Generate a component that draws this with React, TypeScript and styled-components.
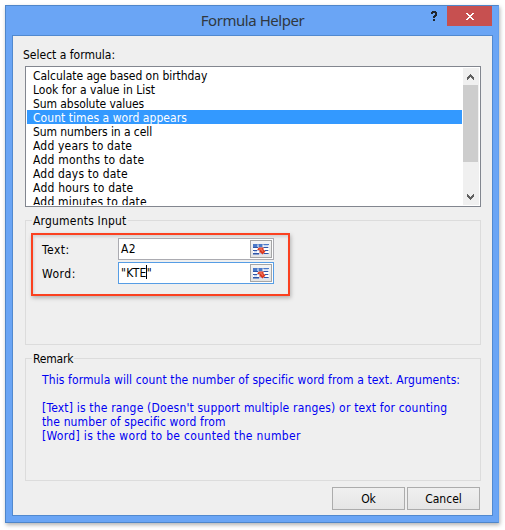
import React from "react";
import styled, { createGlobalStyle } from "styled-components";

const Global = createGlobalStyle`
  * { box-sizing: border-box; }
  body { margin: 0; background: #fff; overflow: hidden; }
`;

const Page = styled.div`
  width: 505px;
  height: 530px;
  padding: 5px 6px 7px 5px;
  font: 12px/14px "DejaVu Sans Condensed", "DejaVu Sans", sans-serif;
  font-stretch: condensed;
  color: #000;
`;

const Window = styled.section`
  width: 494px;
  height: 518px;
  display: flex;
  flex-direction: column;
  padding: 0 6px 6px;
  border: 1px solid #4f86c9;
  border-right-color: #629fee;
  background: #6aa5f5;
  box-shadow: 1px 2px 4px rgba(0, 0, 0, 0.3);
`;

const TitleBar = styled.header`
  height: 29px;
  display: grid;
  grid-template-columns: 92px 1fr 92px;
`;

const Title = styled.h1`
  grid-column: 2;
  margin: 0;
  padding: 1px 0 0 1px;
  text-align: center;
  white-space: nowrap;
  font: 15px/26px "Noto Sans", "Open Sans", sans-serif;
  letter-spacing: -0.45px;
  color: #303840;
`;

const Controls = styled.div`
  display: flex;
  justify-content: flex-end;
`;

const HelpButton = styled.button`
  width: 28px;
  height: 20px;
  padding: 0 0 0 1px;
  border: 0;
  background: none;
  display: flex;
  justify-content: center;
`;

const CloseButton = styled.button`
  width: 45px;
  height: 20px;
  padding: 0 0 0 1px;
  border: 0;
  background: #c75050;
  display: flex;
  align-items: center;
  justify-content: center;
`;

const Client = styled.main`
  width: 481px;
  height: 481px;
  flex: none;
  border: 1px solid #5189cf;
  background: #efefef;
  padding: 11px 11px 4px 12px;
  display: flex;
  flex-direction: column;
`;

const Prompt = styled.label`
  height: 19px;
  margin-left: -2px;
  line-height: 16px;
  white-space: nowrap;
`;

const ListBox = styled.div`
  height: 141px;
  flex: none;
  display: flex;
  gap: 1px;
  border: 1px solid #82868f;
  background: #fff;
  padding: 1px;
`;

const Options = styled.ul`
  width: 435px;
  margin: 0;
  padding: 0;
  list-style: none;
  overflow: hidden;
`;

const Option = styled.li<{ $selected?: boolean; $tracking: number }>`
  height: 14px;
  padding-left: 6px;
  line-height: 16px;
  letter-spacing: ${(p) => p.$tracking}px;
  white-space: nowrap;
  background: ${(p) => (p.$selected ? "#3399ff" : "transparent")};
  color: ${(p) => (p.$selected ? "#fff" : "#000")};
`;

const ScrollBar = styled.div`
  width: 16px;
  background: #f0f0f0;
  display: grid;
  grid-template-rows: 17px 77px 1fr 17px;
`;

const ScrollArrow = styled.div`
  width: 15px;
  display: flex;
  align-items: center;
  justify-content: center;
`;

const Thumb = styled.div`
  width: 15px;
  background: #cdcdcd;
`;

const Group = styled.fieldset<{ $height: number }>`
  height: ${(p) => p.$height}px;
  margin: 5px 0 0;
  padding: 0;
  border: 1px solid #dcdcdc;
  flex: none;
  min-width: 0;
`;

const GroupTitle = styled.legend<{ $tracking: number }>`
  height: 16px;
  margin: 0 0 0 6px;
  padding: 0 1px;
  line-height: 18px;
  letter-spacing: ${(p) => p.$tracking}px;
`;

const ArgumentsFrame = styled.div`
  width: 259px;
  height: 63px;
  margin: 5px 0 0 5px;
  border: 2px solid #fb4120;
  box-shadow: 1px 2px 4px rgba(0, 0, 0, 0.25), inset 1px 2px 3px rgba(0, 0, 0, 0.12);
  padding: 3px 0 0 8px;
  display: grid;
  grid-template-rows: 22px 22px;
  row-gap: 2px;
`;

const Field = styled.div`
  display: grid;
  grid-template-columns: 77px 156px;
`;

const FieldLabel = styled.span`
  padding-left: 1px;
  line-height: 24px;
  letter-spacing: 0.5px;
`;

const FieldBox = styled.div<{ $focused?: boolean }>`
  height: 22px;
  border: 1px solid ${(p) => (p.$focused ? "#569de5" : "#ababb1")};
  background: #fff;
  padding: 1px 1px 1px 2px;
  display: flex;
  justify-content: space-between;
`;

const FieldValue = styled.span`
  display: flex;
  line-height: 19px;
  letter-spacing: 0.3px;
`;

const Caret = styled.i`
  width: 1px;
  height: 14px;
  margin: 1px 0 0 -1px;
  background: #000;
`;

const PickerButton = styled.button`
  width: 22px;
  height: 18px;
  padding: 0;
  border: 1px solid #a5a5a5;
  background: linear-gradient(#f4f4f4, #e4e4e4);
  display: flex;
  align-items: center;
  justify-content: center;
`;

const Remark = styled.div`
  padding: 7px 0 0 16px;
  color: #0000f2;
`;

const RemarkLine = styled.p<{ $tracking?: number }>`
  height: 14px;
  margin: 0;
  letter-spacing: ${(p) => p.$tracking ?? 0}px;
  white-space: pre;
`;

const Actions = styled.footer`
  margin: 6px 1px 0 0;
  display: flex;
  justify-content: flex-end;
  gap: 2px;
`;

const ActionButton = styled.button`
  width: 73px;
  height: 23px;
  padding: 0;
  border: 1px solid #acacac;
  background: linear-gradient(#f0f0f0, #e5e5e5);
  color: #000;
  font: inherit;
`;

const options: Array<{ text: string; tracking: number }> = [
  { text: "Calculate age based on birthday", tracking: -0.04 },
  { text: "Look for a value in List", tracking: 0 },
  { text: "Sum absolute values", tracking: -0.08 },
  { text: "Count times a word appears", tracking: 0.05 },
  { text: "Sum numbers in a cell", tracking: -0.08 },
  { text: "Add years to date", tracking: 0.18 },
  { text: "Add months to date", tracking: 0.24 },
  { text: "Add days to date", tracking: 0.18 },
  { text: "Add hours to date", tracking: 0.22 },
  { text: "Add minutes to date", tracking: 0.2 },
];

const HelpIcon = () => (
  <svg width="8" height="20" viewBox="0 0 8 20" shapeRendering="crispEdges">
    <path d="M2 5h4v1h1v4H6v1H5v1H3v-2h1V9h1V7H3v1H1V6h1zM3 13h2v2H3z" fill="#20262e" />
  </svg>
);

const CloseIcon = () => (
  <svg width="8" height="7" viewBox="0 0 8 7" shapeRendering="crispEdges">
    <path
      d="M0 0h2v1h1v1h2V1h1V0h2v1H7v1H6v1H5v1h1v1h1v1h1v1H6V6H5V5H3v1H2v1H0V6h1V5h1V4h1V3H2V2H1V1H0z"
      fill="#fff"
    />
  </svg>
);

const Chevron = ({ down }: { down?: boolean }) => (
  <svg width="7" height="6" viewBox="0 0 7 6" shapeRendering="crispEdges">
    <path
      d={
        down
          ? "M0 0h1v1h1v1h1v1h1V2h1V1h1V0h1v3H6v1H5v1H4v1H3V5H2V4H1V3H0z"
          : "M3 0h1v1h1v1h1v1h1v3H6V5H5V4H4V3H3v1H2v1H1v1H0V3h1V2h1V1h1z"
      }
      fill="#606060"
    />
  </svg>
);

const RangeIcon = () => (
  <svg width="16" height="11" viewBox="0 0 16 11">
    <path fill="#fff" d="M0 0h16v11H0z" />
    <path fill="#b9c6df" d="M0 0h16v1H0zM0 3h16v1H0zM0 6h16v1H0zM0 9h16v1.5H0z" />
    <path fill="#4a78c8" d="M0 0h4.500v3H0zM5.500 0h4v3h-4zM10.500 0H16v1h-5.500z" />
    <path fill="#2f56a8" d="M0 3h5v1H0zM10.500 3H15v1h-4.500zM0 6h4v1H0zM12 6h3v1h-3zM0 9h6v1.400H0zM11 9h4.500v1H11z" />
    <path fill="#8aa8de" d="M10.500 1.500h5v.8h-5zM1 7.500h3v.8H1z" />
    <path fill="#d93720" d="M4.500 5 6 3.500h4.500v2L12.500 7.500 9.500 10.500 7.500 8.500 6.500 9V6H4.500z" />
    <path fill="#ef6d52" d="M6.500 4.300h2.800v1.500l1.200 1.300-.9.900-2.200-2.300H6z" />
  </svg>
);

const Picker = () => (
  <PickerButton aria-label="Select range">
    <RangeIcon />
  </PickerButton>
);

export default function App() {
  return (
    <>
      <Global />
      <Page>
        <Window>
          <TitleBar>
            <Title>Formula Helper</Title>
            <Controls>
              <HelpButton aria-label="Help">
                <HelpIcon />
              </HelpButton>
              <CloseButton aria-label="Close">
                <CloseIcon />
              </CloseButton>
            </Controls>
          </TitleBar>
          <Client>
            <Prompt>Select a formula:</Prompt>
            <ListBox>
              <Options>
                {options.map((o, i) => (
                  <Option key={o.text} $selected={i === 3} $tracking={o.tracking}>
                    {o.text}
                  </Option>
                ))}
              </Options>
              <ScrollBar>
                <ScrollArrow>
                  <Chevron />
                </ScrollArrow>
                <Thumb />
                <span />
                <ScrollArrow>
                  <Chevron down />
                </ScrollArrow>
              </ScrollBar>
            </ListBox>
            <Group $height={133}>
              <GroupTitle $tracking={0.2}>Arguments Input</GroupTitle>
              <ArgumentsFrame>
                <Field>
                  <FieldLabel>Text:</FieldLabel>
                  <FieldBox>
                    <FieldValue>A2</FieldValue>
                    <Picker />
                  </FieldBox>
                </Field>
                <Field>
                  <FieldLabel>Word:</FieldLabel>
                  <FieldBox $focused>
                    <FieldValue>
                      "KTE
                      <Caret />"
                    </FieldValue>
                    <Picker />
                  </FieldBox>
                </Field>
              </ArgumentsFrame>
            </Group>
            <Group $height={131}>
              <GroupTitle $tracking={-0.2}>Remark</GroupTitle>
              <Remark>
                <RemarkLine $tracking={0.11}>
                  This formula will count the number of specific word from a text. Arguments:
                </RemarkLine>
                <RemarkLine> </RemarkLine>
                <RemarkLine $tracking={0.18}>
                  [Text] is the range (Doesn't support multiple ranges) or text for counting
                </RemarkLine>
                <RemarkLine $tracking={0.12}>the number of specific word from</RemarkLine>
                <RemarkLine $tracking={0.33}>[Word] is the word to be counted the number</RemarkLine>
              </Remark>
            </Group>
            <Actions>
              <ActionButton>Ok</ActionButton>
              <ActionButton>Cancel</ActionButton>
            </Actions>
          </Client>
        </Window>
      </Page>
    </>
  );
}
